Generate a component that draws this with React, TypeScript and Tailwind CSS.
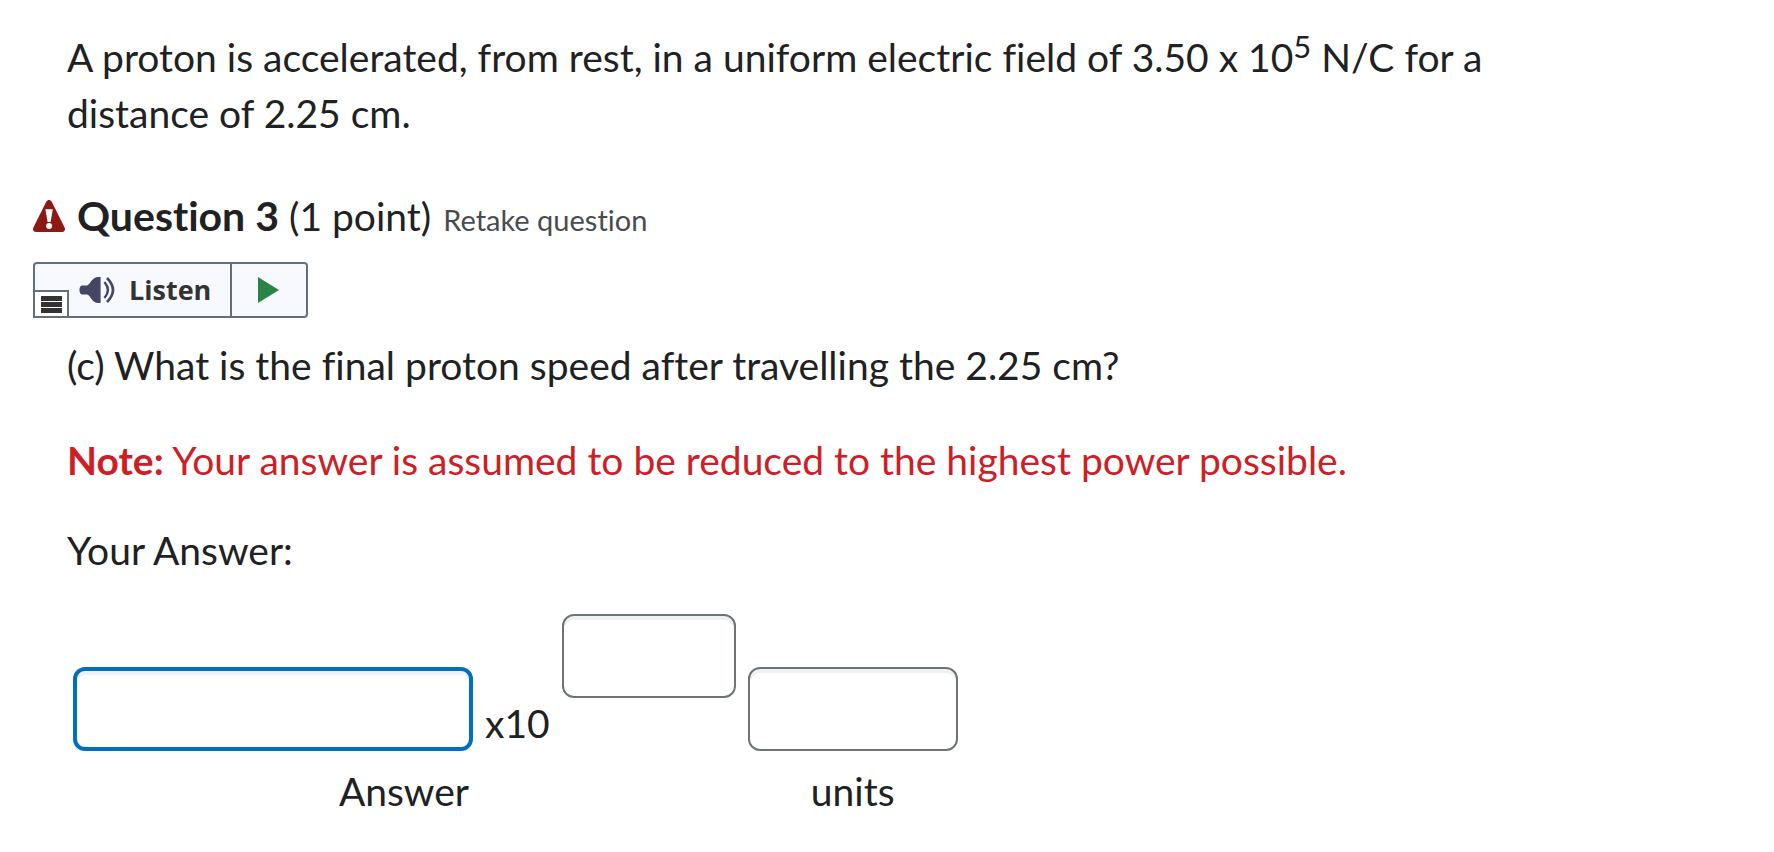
import { useState } from "react";

const fieldClass =
  "h-[84px] rounded-xl border-2 border-[#6e7376] bg-white px-6 shadow-[inset_0_4px_0_0_#eff1f3] outline-none";

function WarningIcon() {
  return (
    <svg viewBox="0 0 32 32" className="h-8 w-8 shrink-0" aria-hidden="true">
      <path
        d="M13.4 1.6C14.6-.5 17.4-.5 18.6 1.6L31.6 27.6C32.6 29.8 31.4 32 29 32H3C.6 32-.6 29.8.4 27.6Z"
        fill="#8b1a15"
      />
      <path d="M12.4 9.2h7.4l-2.2 12.8h-3z" fill="#fff" />
      <circle cx="16.1" cy="26" r="3" fill="#fff" />
    </svg>
  );
}

function SpeakerIcon() {
  return (
    <svg viewBox="0 0 36 28" className="h-7 w-9 shrink-0" aria-hidden="true">
      <path
        d="M3 9.4H8C11.6 8.4 12.6 1 19.4 1H21.6V27H19.4C12.6 27 11.6 19 8 18.4H3C-.4 18.4-.4 9.4 3 9.4Z"
        fill="#454565"
      />
      <path d="M25.4 6Q32.4 14 25.4 22" fill="none" stroke="#454565" strokeWidth="2.4" />
      <path d="M28 2Q40 14 28 26" fill="none" stroke="#454565" strokeWidth="2.6" />
    </svg>
  );
}

function ListenToolbar() {
  return (
    <div className="relative flex h-14 w-[275px] overflow-hidden rounded rounded-bl-none border-2 border-[#666e76] bg-[#f8f9fe]">
      <button
        type="button"
        className="flex flex-1 items-center gap-3.5 border-r-2 border-[#666e76] pl-11 font-['Open_Sans',sans-serif] text-[27px] leading-8 font-bold text-[#333]"
      >
        <SpeakerIcon />
        Listen
      </button>
      <button type="button" aria-label="Play" className="flex w-[74px] items-center pl-[26px]">
        <svg viewBox="0 0 21 26" className="h-[26px] w-[21px]" aria-hidden="true">
          <path d="M0 0 21 13 0 26Z" fill="#2a8347" />
        </svg>
      </button>
      <button
        type="button"
        aria-label="Menu"
        className="absolute bottom-0 left-0 flex h-[26px] w-[34px] items-center justify-center border-t-2 border-r-2 border-[#666e76] bg-white"
      >
        <svg viewBox="0 0 21 17" className="h-[17px] w-[21px]" aria-hidden="true">
          <path d="M0 0H21V5H0ZM0 6H21V11H0ZM0 12H21V17H0Z" fill="#333" />
        </svg>
      </button>
    </div>
  );
}

export default function App() {
  const [coefficient, setCoefficient] = useState("");
  const [exponent, setExponent] = useState("");
  const [units, setUnits] = useState("");

  return (
    <main className="bg-white pt-[29px] pr-40 pb-8 pl-[33px] font-[Lato,sans-serif] text-[39px] leading-[56px] text-[#202122] [font-variant-ligatures:none]">
      <p className="pl-[34px]">
        A proton is accelerated, from rest, in a uniform electric field of 3.50 x 10
        <sup className="static align-[14px] text-[31px]">5</sup> N/C for a distance of 2.25 cm.
      </p>

      <div className="mt-[47px] flex items-center gap-3">
        <WarningIcon />
        <div className="flex items-baseline gap-3">
          <h2>
            <strong className="text-[41px] leading-[56px] font-bold">Question 3</strong> (1 point)
          </h2>
          <span className="text-[29px] leading-8 text-[#494c4e]">Retake question</span>
        </div>
      </div>

      <div className="mt-[18px]">
        <ListenToolbar />
      </div>

      <form className="pl-[34px]" onSubmit={(e) => e.preventDefault()}>
        <p className="mt-[19px]">(c) What is the final proton speed after travelling the 2.25 cm?</p>
        <p className="mt-[39px] text-[#cd2026]">
          <strong className="font-bold">Note:</strong> Your answer is assumed to be reduced to the
          highest power possible.
        </p>
        <p className="mt-[34px]">Your Answer:</p>

        <div className="mt-9 flex items-end pl-1.5">
          <div className="flex flex-col items-end">
            <input
              id="answer"
              type="text"
              value={coefficient}
              onChange={(e) => setCoefficient(e.target.value)}
              className="h-[84px] w-[400px] rounded-xl border-4 border-[#006fbf] bg-white px-6 shadow-[inset_0_4px_0_0_#f1f1f5] outline-none"
            />
            <label htmlFor="answer" className="mt-3 pr-1">
              Answer
            </label>
          </div>
          <label htmlFor="exponent" className="mb-[68px] ml-3">
            x10
          </label>
          <input
            id="exponent"
            type="text"
            value={exponent}
            onChange={(e) => setExponent(e.target.value)}
            className={`${fieldClass} mb-[121px] ml-3 w-[174px]`}
          />
          <div className="ml-3 flex flex-col items-center">
            <input
              id="units"
              type="text"
              value={units}
              onChange={(e) => setUnits(e.target.value)}
              className={`${fieldClass} w-[210px]`}
            />
            <label htmlFor="units" className="mt-3">
              units
            </label>
          </div>
        </div>
      </form>
    </main>
  );
}
